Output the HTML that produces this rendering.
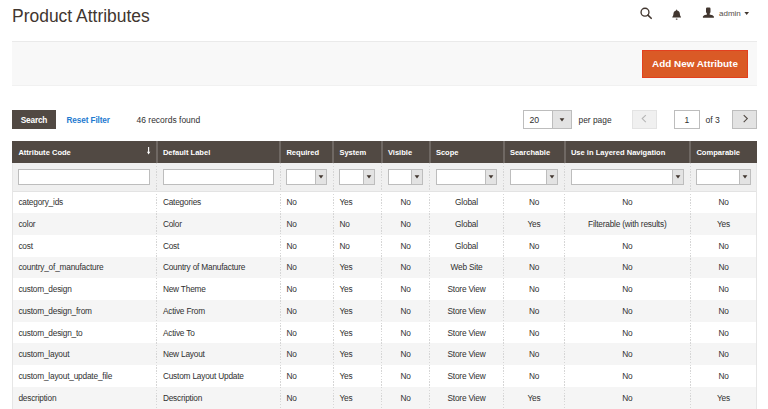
<!DOCTYPE html><html><head><meta charset="utf-8"><style>
*{box-sizing:border-box;margin:0;padding:0}
html,body{width:768px;height:409px;overflow:hidden;background:#fff}
body{position:relative;font-family:"Liberation Sans",sans-serif;color:#303030}
.a{position:absolute;white-space:nowrap}
.title{left:12.1px;top:2.8px;font-size:17.45px;line-height:26px;color:#41362f}
.bar{left:12px;top:41px;width:745px;height:45px;background:#f8f8f8;border-top:1px solid #eaeaea;border-bottom:1px solid #f1f1f1}
.btn-add{left:642px;top:50px;width:106px;height:28px;background:#da5a26;border:1px solid #e3401f;color:#fff;font-weight:bold;font-size:9.9px;line-height:26px;text-align:center}
.btn-search{left:12px;top:110px;width:44px;height:19px;background:#514943;color:#fff;font-weight:bold;font-size:8.3px;letter-spacing:-0.2px;line-height:20px;text-align:center}
.reset{left:66.5px;top:110.6px;line-height:20px;font-size:8.2px;letter-spacing:-0.1px;font-weight:bold;color:#1f7bd0}
.found{left:136.5px;top:110px;line-height:20px;font-size:8.5px;color:#303030}
.sel{border:1px solid #bdbdbd;background:#fff}
.sel .arr{position:absolute;right:0;top:0;bottom:0;background:#e3e3e3;border-left:1px solid #bdbdbd}
.tri{position:absolute;left:50%;top:50%;width:6px;height:4px;margin-left:-3px;margin-top:-1.6px}
.hdr{left:12px;top:140.6px;width:745px;height:22.1px;background:#514943}
.hc{position:absolute;top:0;height:100%;color:#fff;font-weight:bold;font-size:7.55px;line-height:22.1px;padding-left:6.4px;padding-top:1px}
.hd{position:absolute;top:0;height:100%;width:2px;background:#6f6863}
.flt{left:12px;top:162.7px;width:745px;height:28.7px;background:#f0f0f0}
.row{left:12px;width:745px;height:21.72px}
.row.e{background:#f5f5f5}
.c{position:absolute;top:0.9px;height:100%;font-size:8.3px;letter-spacing:-0.2px;line-height:21.72px;padding-left:6.4px;color:#303030}
.c.ctr{padding-left:0;text-align:center}
.vd{position:absolute;width:1px;background:repeating-linear-gradient(to bottom,#d6d6d6 0,#d6d6d6 1.4px,transparent 1.4px,transparent 2.8px)}
</style></head><body><div class="a title">Product Attributes</div><svg class="a" style="left:636px;top:4.4px" width="20" height="18" viewBox="0 0 20 18"><circle cx="9" cy="8.2" r="3.95" fill="none" stroke="#41362f" stroke-width="1.35"/><line x1="11.9" y1="11.1" x2="15.2" y2="14.3" stroke="#41362f" stroke-width="1.6" stroke-linecap="round"/></svg><svg class="a" style="left:670px;top:7.9px" width="14" height="14" viewBox="0 0 14 14"><path d="M6.1 2.5 Q6.2 1.6 6.65 1.6 Q7.1 1.6 7.2 2.5 Q9.8 3 9.9 6.2 Q10 8.1 11 8.9 L11 9.6 L2.3 9.6 L2.3 8.9 Q3.3 8.1 3.4 6.2 Q3.5 3 6.1 2.5Z" fill="#41362f"/><ellipse cx="6.65" cy="11.05" rx="0.95" ry="0.6" fill="#41362f"/></svg><svg class="a" style="left:700px;top:5px" width="16" height="15" viewBox="0 0 16 15"><path d="M6 3.7 Q6 2.6 7.1 2.6 L9.4 2.6 Q10.5 2.6 10.5 3.7 L10.5 6.8 Q10.3 8.2 9.6 8.7 L9.6 9.4 Q13.3 10.1 13.9 11.4 L13.9 12.7 L2.9 12.7 L2.9 11.4 Q3.4 10.1 7.0 9.4 L7.0 8.7 Q6.3 8.2 6 6.8Z" fill="#41362f"/></svg><div class="a" style="left:719px;top:7px;font-size:8px;line-height:14px;color:#574e48">admin</div><svg class="a" style="left:740px;top:8px" width="14" height="10" viewBox="0 0 14 10"><polygon points="4.4,4 9,4 6.7,7" fill="#41362f"/></svg><div class="a bar"></div><div class="a btn-add">Add New Attribute</div><div class="a btn-search">Search</div><div class="a reset">Reset Filter</div><div class="a found">46 records found</div><div class="a sel" style="left:523px;top:110px;width:49px;height:19px"><div class="a" style="left:5.5px;top:0.5px;line-height:17px;font-size:8.7px;color:#303030">20</div><div class="arr" style="width:19px"><svg class="tri" viewBox="0 0 6 4"><polygon points="0.6,0.3 5.4,0.3 3,3.6" fill="#41362f"/></svg></div></div><div class="a" style="left:578.5px;top:110px;line-height:20px;font-size:8.4px;color:#303030">per page</div><div class="a" style="left:632px;top:110px;width:25px;height:19px;background:#f0f0f0;border:1px solid #e3e3e3"></div><svg class="a" style="left:632px;top:110px" width="26" height="19" viewBox="0 0 26 19"><path d="M13.8 5.1 L10.2 8.6 L13.8 12.1" fill="none" stroke="#b5b5b5" stroke-width="1.1"/></svg><div class="a" style="left:674px;top:110px;width:25.5px;height:19px;background:#fff;border:1px solid #bdbdbd;text-align:center;line-height:18px;font-size:8.5px;color:#303030">1</div><div class="a" style="left:705.5px;top:110px;line-height:20px;font-size:8.6px;color:#303030">of 3</div><div class="a" style="left:731.6px;top:110px;width:25.4px;height:19px;background:#e3e3e3;border:1px solid #bdbdbd"></div><svg class="a" style="left:731.5px;top:110px" width="26" height="19" viewBox="0 0 26 19"><path d="M11.7 5.1 L15.3 8.6 L11.7 12.1" fill="none" stroke="#514943" stroke-width="1.1"/></svg><div class="a hdr"><div class="hc" style="left:0px;width:144.5px">Attribute Code</div><div class="hc" style="left:144.5px;width:123.5px">Default Label</div><div class="hd" style="left:143.5px"></div><div class="hc" style="left:268px;width:53px">Required</div><div class="hd" style="left:267px"></div><div class="hc" style="left:321px;width:48.5px">System</div><div class="hd" style="left:320px"></div><div class="hc" style="left:369.5px;width:48.0px">Visible</div><div class="hd" style="left:368.5px"></div><div class="hc" style="left:417.5px;width:74.0px">Scope</div><div class="hd" style="left:416.5px"></div><div class="hc" style="left:491.5px;width:61.0px">Searchable</div><div class="hd" style="left:490.5px"></div><div class="hc" style="left:552.5px;width:125.5px">Use in Layered Navigation</div><div class="hd" style="left:551.5px"></div><div class="hc" style="left:678px;width:67px">Comparable</div><div class="hd" style="left:677px"></div><svg class="a" style="left:134px;top:0" width="10" height="22" viewBox="0 0 10 22"><line x1="2.6" y1="6" x2="2.6" y2="11.5" stroke="#fff" stroke-width="1.1"/><polygon points="0.9,10.8 4.3,10.8 2.6,13.5" fill="#fff"/></svg></div><div class="a flt"><div class="a" style="left:6.2px;top:6.4px;width:132.1px;height:15.7px;background:#fff;border:1px solid #bdbdbd"></div><div class="a" style="left:150.7px;top:6.4px;width:111.1px;height:15.7px;background:#fff;border:1px solid #bdbdbd"></div><div class="vd" style="left:144.0px;top:0;height:100%"></div><div class="a sel" style="left:274.2px;top:6.4px;width:40.6px;height:15.7px"><div class="arr" style="width:11px"><svg class="tri" viewBox="0 0 6 4"><polygon points="0.6,0.3 5.4,0.3 3,3.6" fill="#41362f"/></svg></div></div><div class="vd" style="left:267.5px;top:0;height:100%"></div><div class="a sel" style="left:327.2px;top:6.4px;width:36.1px;height:15.7px"><div class="arr" style="width:11px"><svg class="tri" viewBox="0 0 6 4"><polygon points="0.6,0.3 5.4,0.3 3,3.6" fill="#41362f"/></svg></div></div><div class="vd" style="left:320.5px;top:0;height:100%"></div><div class="a sel" style="left:375.7px;top:6.4px;width:35.6px;height:15.7px"><div class="arr" style="width:11px"><svg class="tri" viewBox="0 0 6 4"><polygon points="0.6,0.3 5.4,0.3 3,3.6" fill="#41362f"/></svg></div></div><div class="vd" style="left:369.0px;top:0;height:100%"></div><div class="a sel" style="left:423.7px;top:6.4px;width:61.6px;height:15.7px"><div class="arr" style="width:11px"><svg class="tri" viewBox="0 0 6 4"><polygon points="0.6,0.3 5.4,0.3 3,3.6" fill="#41362f"/></svg></div></div><div class="vd" style="left:417.0px;top:0;height:100%"></div><div class="a sel" style="left:497.7px;top:6.4px;width:48.6px;height:15.7px"><div class="arr" style="width:11px"><svg class="tri" viewBox="0 0 6 4"><polygon points="0.6,0.3 5.4,0.3 3,3.6" fill="#41362f"/></svg></div></div><div class="vd" style="left:491.0px;top:0;height:100%"></div><div class="a sel" style="left:558.7px;top:6.4px;width:113.1px;height:15.7px"><div class="arr" style="width:11px"><svg class="tri" viewBox="0 0 6 4"><polygon points="0.6,0.3 5.4,0.3 3,3.6" fill="#41362f"/></svg></div></div><div class="vd" style="left:552.0px;top:0;height:100%"></div><div class="a sel" style="left:684.2px;top:6.4px;width:54.6px;height:15.7px"><div class="arr" style="width:11px"><svg class="tri" viewBox="0 0 6 4"><polygon points="0.6,0.3 5.4,0.3 3,3.6" fill="#41362f"/></svg></div></div><div class="vd" style="left:677.5px;top:0;height:100%"></div></div><div class="a row" style="top:191.40px"><div class="c" style="left:0px;width:144.5px">category_ids</div><div class="c" style="left:144.5px;width:123.5px">Categories</div><div class="c" style="left:268px;width:53px">No</div><div class="c" style="left:321px;width:48.5px">Yes</div><div class="c ctr" style="left:369.5px;width:48.0px">No</div><div class="c ctr" style="left:417.5px;width:74.0px">Global</div><div class="c ctr" style="left:491.5px;width:61.0px">No</div><div class="c ctr" style="left:552.5px;width:125.5px">No</div><div class="c ctr" style="left:678px;width:67px">No</div></div><div class="a row e" style="top:213.12px"><div class="c" style="left:0px;width:144.5px">color</div><div class="c" style="left:144.5px;width:123.5px">Color</div><div class="c" style="left:268px;width:53px">No</div><div class="c" style="left:321px;width:48.5px">No</div><div class="c ctr" style="left:369.5px;width:48.0px">No</div><div class="c ctr" style="left:417.5px;width:74.0px">Global</div><div class="c ctr" style="left:491.5px;width:61.0px">Yes</div><div class="c ctr" style="left:552.5px;width:125.5px">Filterable (with results)</div><div class="c ctr" style="left:678px;width:67px">Yes</div></div><div class="a row" style="top:234.84px"><div class="c" style="left:0px;width:144.5px">cost</div><div class="c" style="left:144.5px;width:123.5px">Cost</div><div class="c" style="left:268px;width:53px">No</div><div class="c" style="left:321px;width:48.5px">No</div><div class="c ctr" style="left:369.5px;width:48.0px">No</div><div class="c ctr" style="left:417.5px;width:74.0px">Global</div><div class="c ctr" style="left:491.5px;width:61.0px">No</div><div class="c ctr" style="left:552.5px;width:125.5px">No</div><div class="c ctr" style="left:678px;width:67px">No</div></div><div class="a row e" style="top:256.56px"><div class="c" style="left:0px;width:144.5px">country_of_manufacture</div><div class="c" style="left:144.5px;width:123.5px">Country of Manufacture</div><div class="c" style="left:268px;width:53px">No</div><div class="c" style="left:321px;width:48.5px">Yes</div><div class="c ctr" style="left:369.5px;width:48.0px">No</div><div class="c ctr" style="left:417.5px;width:74.0px">Web Site</div><div class="c ctr" style="left:491.5px;width:61.0px">No</div><div class="c ctr" style="left:552.5px;width:125.5px">No</div><div class="c ctr" style="left:678px;width:67px">No</div></div><div class="a row" style="top:278.28px"><div class="c" style="left:0px;width:144.5px">custom_design</div><div class="c" style="left:144.5px;width:123.5px">New Theme</div><div class="c" style="left:268px;width:53px">No</div><div class="c" style="left:321px;width:48.5px">Yes</div><div class="c ctr" style="left:369.5px;width:48.0px">No</div><div class="c ctr" style="left:417.5px;width:74.0px">Store View</div><div class="c ctr" style="left:491.5px;width:61.0px">No</div><div class="c ctr" style="left:552.5px;width:125.5px">No</div><div class="c ctr" style="left:678px;width:67px">No</div></div><div class="a row e" style="top:300.00px"><div class="c" style="left:0px;width:144.5px">custom_design_from</div><div class="c" style="left:144.5px;width:123.5px">Active From</div><div class="c" style="left:268px;width:53px">No</div><div class="c" style="left:321px;width:48.5px">Yes</div><div class="c ctr" style="left:369.5px;width:48.0px">No</div><div class="c ctr" style="left:417.5px;width:74.0px">Store View</div><div class="c ctr" style="left:491.5px;width:61.0px">No</div><div class="c ctr" style="left:552.5px;width:125.5px">No</div><div class="c ctr" style="left:678px;width:67px">No</div></div><div class="a row" style="top:321.72px"><div class="c" style="left:0px;width:144.5px">custom_design_to</div><div class="c" style="left:144.5px;width:123.5px">Active To</div><div class="c" style="left:268px;width:53px">No</div><div class="c" style="left:321px;width:48.5px">Yes</div><div class="c ctr" style="left:369.5px;width:48.0px">No</div><div class="c ctr" style="left:417.5px;width:74.0px">Store View</div><div class="c ctr" style="left:491.5px;width:61.0px">No</div><div class="c ctr" style="left:552.5px;width:125.5px">No</div><div class="c ctr" style="left:678px;width:67px">No</div></div><div class="a row e" style="top:343.44px"><div class="c" style="left:0px;width:144.5px">custom_layout</div><div class="c" style="left:144.5px;width:123.5px">New Layout</div><div class="c" style="left:268px;width:53px">No</div><div class="c" style="left:321px;width:48.5px">Yes</div><div class="c ctr" style="left:369.5px;width:48.0px">No</div><div class="c ctr" style="left:417.5px;width:74.0px">Store View</div><div class="c ctr" style="left:491.5px;width:61.0px">No</div><div class="c ctr" style="left:552.5px;width:125.5px">No</div><div class="c ctr" style="left:678px;width:67px">No</div></div><div class="a row" style="top:365.16px"><div class="c" style="left:0px;width:144.5px">custom_layout_update_file</div><div class="c" style="left:144.5px;width:123.5px">Custom Layout Update</div><div class="c" style="left:268px;width:53px">No</div><div class="c" style="left:321px;width:48.5px">Yes</div><div class="c ctr" style="left:369.5px;width:48.0px">No</div><div class="c ctr" style="left:417.5px;width:74.0px">Store View</div><div class="c ctr" style="left:491.5px;width:61.0px">No</div><div class="c ctr" style="left:552.5px;width:125.5px">No</div><div class="c ctr" style="left:678px;width:67px">No</div></div><div class="a row e" style="top:386.88px"><div class="c" style="left:0px;width:144.5px">description</div><div class="c" style="left:144.5px;width:123.5px">Description</div><div class="c" style="left:268px;width:53px">No</div><div class="c" style="left:321px;width:48.5px">Yes</div><div class="c ctr" style="left:369.5px;width:48.0px">No</div><div class="c ctr" style="left:417.5px;width:74.0px">Store View</div><div class="c ctr" style="left:491.5px;width:61.0px">Yes</div><div class="c ctr" style="left:552.5px;width:125.5px">No</div><div class="c ctr" style="left:678px;width:67px">Yes</div></div><div class="a vd" style="left:156.0px;top:191.4px;height:217.6px"></div><div class="a vd" style="left:279.5px;top:191.4px;height:217.6px"></div><div class="a vd" style="left:332.5px;top:191.4px;height:217.6px"></div><div class="a vd" style="left:381.0px;top:191.4px;height:217.6px"></div><div class="a vd" style="left:429.0px;top:191.4px;height:217.6px"></div><div class="a vd" style="left:503.0px;top:191.4px;height:217.6px"></div><div class="a vd" style="left:564.0px;top:191.4px;height:217.6px"></div><div class="a vd" style="left:689.5px;top:191.4px;height:217.6px"></div><div class="a" style="left:12px;top:190.9px;width:745px;height:1px;background:#e3e3e3"></div><div class="a" style="left:12px;top:162.7px;width:1px;height:246.3px;background:#e6e6e6"></div><div class="a" style="left:756px;top:162.7px;width:1px;height:246.3px;background:#e6e6e6"></div></body></html>
